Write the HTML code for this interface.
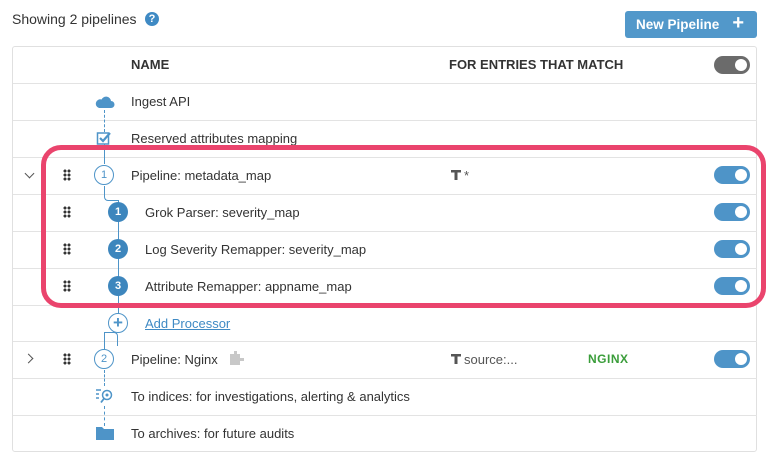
<!DOCTYPE html>
<html><head><meta charset="utf-8"><style>
body{margin:0;width:768px;height:458px;background:#fff;font-family:"Liberation Sans",sans-serif;color:#333;position:relative;overflow:hidden}
.a{position:absolute}
.t{font-size:13px;color:#333;white-space:nowrap}
.line{position:absolute;left:13px;width:744px;height:1px;background:#e3e3e3}
.tog{position:absolute;left:714px;width:36px;height:18px;border-radius:9px;background:#4e94c8}
.tog:after{content:"";position:absolute;right:3px;top:3px;width:12px;height:12px;border-radius:50%;background:#fff}
.dots{position:absolute;left:63px;width:8px;height:12px;background:radial-gradient(circle,#333 1.4px,transparent 1.6px) 0 0/4px 4px}
.oc{position:absolute;width:18px;height:18px;border:1.8px solid #4e94c8;border-radius:50%;background:#fff;color:#4e94c8;font-size:11px;text-align:center;line-height:18px;box-sizing:content-box}
.fc{position:absolute;width:20px;height:20px;border-radius:50%;background:#3d86bd;color:#fff;font-size:11px;font-weight:bold;text-align:center;line-height:20px}
.vl{position:absolute;width:0;border-left:1.5px solid #4e94c8}
.dl{position:absolute;width:0;border-left:1.5px dashed #4e94c8}
</style></head><body>
<div class="a t" style="left:12px;top:11px;font-size:14px">Showing 2 pipelines</div>
<div class="a" style="left:145px;top:12px;width:14px;height:14px;border-radius:50%;background:#3f8ac4;color:#fff;font-size:11px;font-weight:bold;text-align:center;line-height:14px">?</div>
<div class="a" style="left:625px;top:11px;width:132px;height:27px;border-radius:3px;background:#5298ca;color:#fff;font-weight:bold;font-size:13.5px;line-height:27px;"><span style="margin-left:11px">New Pipeline</span><span style="position:absolute;right:13px;font-size:20px;top:-1px">+</span></div>
<div class="a" style="left:12px;top:46px;width:745px;height:406px;border:1px solid #e0e0e0;border-radius:3px;box-sizing:border-box"></div>
<div class="a t" style="left:131px;top:57px;font-weight:bold;font-size:13px">NAME</div>
<div class="a t" style="left:449px;top:57px;font-weight:bold;font-size:13px">FOR ENTRIES THAT MATCH</div>
<div class="tog" style="top:56px;background:#6b6b6b"></div>
<div class="line" style="top:83px"></div><div class="line" style="top:120px"></div><div class="line" style="top:157px"></div><div class="line" style="top:194px"></div><div class="line" style="top:231px"></div><div class="line" style="top:268px"></div><div class="line" style="top:305px"></div><div class="line" style="top:341px"></div><div class="line" style="top:378px"></div><div class="line" style="top:415px"></div>
<div class="dl" style="left:104px;top:110px;height:22px"></div>
<div class="vl" style="left:104px;top:144px;height:20px"></div>
<div class="a" style="left:104px;top:186px;width:14px;height:14px;border-left:1.5px solid #4e94c8;border-bottom:1.5px solid #4e94c8;border-bottom-left-radius:4px"></div>
<div class="vl" style="left:118px;top:200px;height:115px"></div>
<div class="a" style="left:104px;top:332px;width:14px;height:14px;border-right:1.5px solid #4e94c8;border-top:1.5px solid #4e94c8;border-top-right-radius:4px;box-sizing:border-box"></div>
<div class="vl" style="left:104px;top:333px;height:16px"></div>
<div class="dl" style="left:104px;top:370px;height:16px"></div>
<div class="dl" style="left:104px;top:406px;height:20px"></div>
<svg class="a" style="left:95px;top:93px" width="20" height="16" viewBox="0 0 20 16"><path d="M4 15h12a3.5 3.5 0 0 0 0-7a5 5 0 0 0-9.5-1.5A4 4 0 0 0 4 15z" fill="#4e94c8"/></svg>
<svg class="a" style="left:96px;top:130px" width="16" height="16" viewBox="0 0 16 16"><rect x="1.5" y="3" width="11" height="11" fill="#fff" stroke="#4e94c8" stroke-width="1.5"/><path d="M4 8l3 3 7-8" fill="none" stroke="#4e94c8" stroke-width="2.2"/></svg>
<div class="oc" style="left:94px;top:165px">1</div>
<div class="fc" style="left:108px;top:202px">1</div>
<div class="fc" style="left:108px;top:239px">2</div>
<div class="fc" style="left:108px;top:276px">3</div>
<div class="oc" style="left:108px;top:313px;font-size:17px;font-weight:bold;line-height:17px">+</div>
<div class="oc" style="left:94px;top:349px">2</div>
<svg class="a" style="left:95px;top:387px" width="20" height="18" viewBox="0 0 20 18"><path d="M1 3h5M1 7h3M1 11h3" stroke="#4e94c8" stroke-width="1.5"/><circle cx="12" cy="8" r="4.5" fill="none" stroke="#4e94c8" stroke-width="1.5"/><circle cx="12" cy="8" r="1.5" fill="#4e94c8"/><path d="M9 11.5l-3 4" stroke="#4e94c8" stroke-width="1.8"/></svg>
<svg class="a" style="left:96px;top:426px" width="18" height="14" viewBox="0 0 18 14"><path d="M0 1h6l2 2h10v11H0z" fill="#4e94c8"/></svg>
<div class="a t" style="left:131px;top:94px">Ingest API</div>
<div class="a t" style="left:131px;top:131px">Reserved attributes mapping</div>
<div class="a t" style="left:131px;top:168px">Pipeline: metadata_map</div>
<div class="a t" style="left:145px;top:205px">Grok Parser: severity_map</div>
<div class="a t" style="left:145px;top:242px">Log Severity Remapper: severity_map</div>
<div class="a t" style="left:145px;top:279px">Attribute Remapper: appname_map</div>
<div class="a t" style="left:145px;top:316px;color:#3f8ac4;text-decoration:underline">Add Processor</div>
<div class="a t" style="left:131px;top:352px">Pipeline: Nginx</div>
<svg class="a" style="left:230px;top:351px" width="15" height="14" viewBox="0 0 15 14"><path d="M0 3h4V0h3v3h3v4h4v3h-4v4H0z" fill="#c8c8c8"/></svg>
<div class="a t" style="left:131px;top:389px">To indices: for investigations, alerting &amp; analytics</div>
<div class="a t" style="left:131px;top:426px">To archives: for future audits</div>
<div class="a" style="left:26px;top:170px;width:6px;height:6px;border-right:1.2px solid #555;border-bottom:1.2px solid #555;transform:rotate(45deg)"></div>
<div class="a" style="left:25px;top:355px;width:6px;height:6px;border-right:1.2px solid #555;border-bottom:1.2px solid #555;transform:rotate(-45deg)"></div>
<div class="dots" style="top:169px"></div><div class="dots" style="top:206px"></div><div class="dots" style="top:243px"></div><div class="dots" style="top:280px"></div><div class="dots" style="top:353px"></div>
<svg class="a" style="left:451px;top:170px" width="10" height="10" viewBox="0 0 10 10"><path d="M0 0h10v2.5H6.5V10h-3V2.5H0z" fill="#555"/></svg>
<div class="a t" style="left:464px;top:168px;color:#555">*</div>
<svg class="a" style="left:451px;top:354px" width="10" height="10" viewBox="0 0 10 10"><path d="M0 0h10v2.5H6.5V10h-3V2.5H0z" fill="#555"/></svg>
<div class="a t" style="left:464px;top:352px;color:#555">source:...</div>
<div class="a" style="left:588px;top:352px;color:#3a9d3a;font-weight:900;font-size:12px;letter-spacing:0.5px">NGINX</div>
<div class="tog" style="top:166px"></div><div class="tog" style="top:203px"></div><div class="tog" style="top:240px"></div><div class="tog" style="top:277px"></div><div class="tog" style="top:350px"></div>
<div class="a" style="left:41px;top:145px;width:725px;height:163px;border:5px solid #ea446d;border-radius:20px;box-sizing:border-box"></div>
</body></html>
